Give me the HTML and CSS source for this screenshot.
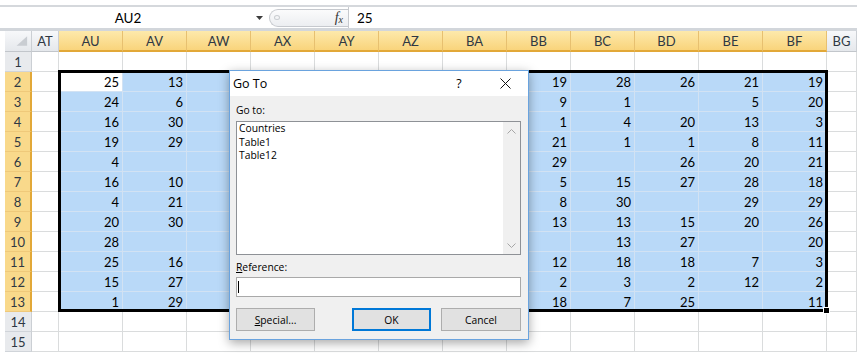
FILE: index.html
```html
<!DOCTYPE html>
<html>
<head>
<meta charset="utf-8">
<link rel="stylesheet" href="styles.css">
</head>
<body>
<div class="app">
  <div class="fbar">
    <div class="namebox">AU2</div>
    <div class="dd"><svg width="7" height="4" viewBox="0 0 7 4"><path d="M0 0H7L3.5 4Z" fill="#3c3c3c"/></svg></div>
    <div class="pill"><span class="grip"></span><span class="fx"><i>f</i><sub>x</sub></span></div>
    <div class="vsep"></div>
    <div class="fval">25</div>
  </div>

  <div class="sheet">
    <div class="h corner"><svg width="27" height="21" viewBox="0 0 27 21"><path d="M23 5V15H12Z" fill="#c9cdd2"/></svg></div>
    <div class="h">AT</div>
    <div class="h on">AU</div><div class="h on">AV</div><div class="h on">AW</div><div class="h on">AX</div><div class="h on">AY</div><div class="h on">AZ</div><div class="h on">BA</div><div class="h on">BB</div><div class="h on">BC</div><div class="h on">BD</div><div class="h on">BE</div><div class="h on">BF</div>
    <div class="h">BG</div>

    <div class="h rh">1</div>
    <div class="c"></div><div class="c"></div><div class="c"></div><div class="c"></div><div class="c"></div><div class="c"></div><div class="c"></div><div class="c"></div><div class="c"></div><div class="c"></div><div class="c"></div><div class="c"></div><div class="c"></div><div class="c"></div>

    <div class="h rh on">2</div><div class="c"></div>
    <div class="c s act">25</div><div class="c s">13</div><div class="c s"></div><div class="c s"></div><div class="c s"></div><div class="c s"></div><div class="c s"></div><div class="c s">19</div><div class="c s">28</div><div class="c s">26</div><div class="c s">21</div><div class="c s">19</div>
    <div class="c"></div>

    <div class="h rh on">3</div><div class="c"></div>
    <div class="c s">24</div><div class="c s">6</div><div class="c s"></div><div class="c s"></div><div class="c s"></div><div class="c s"></div><div class="c s"></div><div class="c s">9</div><div class="c s">1</div><div class="c s"></div><div class="c s">5</div><div class="c s">20</div>
    <div class="c"></div>

    <div class="h rh on">4</div><div class="c"></div>
    <div class="c s">16</div><div class="c s">30</div><div class="c s"></div><div class="c s"></div><div class="c s"></div><div class="c s"></div><div class="c s"></div><div class="c s">1</div><div class="c s">4</div><div class="c s">20</div><div class="c s">13</div><div class="c s">3</div>
    <div class="c"></div>

    <div class="h rh on">5</div><div class="c"></div>
    <div class="c s">19</div><div class="c s">29</div><div class="c s"></div><div class="c s"></div><div class="c s"></div><div class="c s"></div><div class="c s"></div><div class="c s">21</div><div class="c s">1</div><div class="c s">1</div><div class="c s">8</div><div class="c s">11</div>
    <div class="c"></div>

    <div class="h rh on">6</div><div class="c"></div>
    <div class="c s">4</div><div class="c s"></div><div class="c s"></div><div class="c s"></div><div class="c s"></div><div class="c s"></div><div class="c s"></div><div class="c s">29</div><div class="c s"></div><div class="c s">26</div><div class="c s">20</div><div class="c s">21</div>
    <div class="c"></div>

    <div class="h rh on">7</div><div class="c"></div>
    <div class="c s">16</div><div class="c s">10</div><div class="c s"></div><div class="c s"></div><div class="c s"></div><div class="c s"></div><div class="c s"></div><div class="c s">5</div><div class="c s">15</div><div class="c s">27</div><div class="c s">28</div><div class="c s">18</div>
    <div class="c"></div>

    <div class="h rh on">8</div><div class="c"></div>
    <div class="c s">4</div><div class="c s">21</div><div class="c s"></div><div class="c s"></div><div class="c s"></div><div class="c s"></div><div class="c s"></div><div class="c s">8</div><div class="c s">30</div><div class="c s"></div><div class="c s">29</div><div class="c s">29</div>
    <div class="c"></div>

    <div class="h rh on">9</div><div class="c"></div>
    <div class="c s">20</div><div class="c s">30</div><div class="c s"></div><div class="c s"></div><div class="c s"></div><div class="c s"></div><div class="c s"></div><div class="c s">13</div><div class="c s">13</div><div class="c s">15</div><div class="c s">20</div><div class="c s">26</div>
    <div class="c"></div>

    <div class="h rh on">10</div><div class="c"></div>
    <div class="c s">28</div><div class="c s"></div><div class="c s"></div><div class="c s"></div><div class="c s"></div><div class="c s"></div><div class="c s"></div><div class="c s"></div><div class="c s">13</div><div class="c s">27</div><div class="c s"></div><div class="c s">20</div>
    <div class="c"></div>

    <div class="h rh on">11</div><div class="c"></div>
    <div class="c s">25</div><div class="c s">16</div><div class="c s"></div><div class="c s"></div><div class="c s"></div><div class="c s"></div><div class="c s"></div><div class="c s">12</div><div class="c s">18</div><div class="c s">18</div><div class="c s">7</div><div class="c s">3</div>
    <div class="c"></div>

    <div class="h rh on">12</div><div class="c"></div>
    <div class="c s">15</div><div class="c s">27</div><div class="c s"></div><div class="c s"></div><div class="c s"></div><div class="c s"></div><div class="c s"></div><div class="c s">2</div><div class="c s">3</div><div class="c s">2</div><div class="c s">12</div><div class="c s">2</div>
    <div class="c"></div>

    <div class="h rh on">13</div><div class="c"></div>
    <div class="c s">1</div><div class="c s">29</div><div class="c s"></div><div class="c s"></div><div class="c s"></div><div class="c s"></div><div class="c s"></div><div class="c s">18</div><div class="c s">7</div><div class="c s">25</div><div class="c s"></div><div class="c s">11</div>
    <div class="c"></div>

    <div class="h rh">14</div>
    <div class="c"></div><div class="c"></div><div class="c"></div><div class="c"></div><div class="c"></div><div class="c"></div><div class="c"></div><div class="c"></div><div class="c"></div><div class="c"></div><div class="c"></div><div class="c"></div><div class="c"></div><div class="c"></div>

    <div class="h rh">15</div>
    <div class="c"></div><div class="c"></div><div class="c"></div><div class="c"></div><div class="c"></div><div class="c"></div><div class="c"></div><div class="c"></div><div class="c"></div><div class="c"></div><div class="c"></div><div class="c"></div><div class="c"></div><div class="c"></div>

    <div class="selbox"><span class="handle"></span></div>
  </div>

  <div class="dialog">
    <div class="titlebar">
      <span class="title">Go To</span>
      <span class="tbtn help">?</span>
      <span class="tbtn close"><svg width="11" height="11" viewBox="0 0 11 11"><path d="M0.5 0.5L10.5 10.5M10.5 0.5L0.5 10.5" stroke="#111" stroke-width="1" fill="none"/></svg></span>
    </div>
    <div class="dbody">
      <div class="lbl">Go to:</div>
      <div class="list">
        <div class="items">
          <div>Countries</div>
          <div>Table1</div>
          <div>Table12</div>
        </div>
        <div class="vscroll">
          <svg width="9" height="5" viewBox="0 0 9 5"><path d="M0.5 4.5L4.5 0.5L8.5 4.5" stroke="#a6a6a6" fill="none"/></svg>
          <svg width="9" height="5" viewBox="0 0 9 5"><path d="M0.5 0.5L4.5 4.5L8.5 0.5" stroke="#a6a6a6" fill="none"/></svg>
        </div>
      </div>
      <div class="lbl ref"><u>R</u>eference:</div>
      <div class="input"><span class="caret"></span></div>
      <div class="buttons">
        <button class="btn"><u>S</u>pecial...</button>
        <span class="spacer"></span>
        <button class="btn def">OK</button>
        <button class="btn wide">Cancel</button>
      </div>
    </div>
  </div>
</div>
</body>
</html>
```

FILE: styles.css
```css
* { box-sizing: border-box; }

body {
  margin: 0;
  background: #fff;
  font-family: Lato, "Liberation Sans", sans-serif;
}

.app {
  position: relative;
  width: 857px;
  height: 353px;
  overflow: hidden;
}

/* formula bar */
.fbar {
  display: flex;
  align-items: center;
  margin-top: 5px;
  height: 26px;
  border-top: 2px solid #d5d8dc;
  border-bottom: 3px solid #d2d6db;
  font-size: 13.5px;
  color: #000;
}

.namebox {
  width: 256px;
  text-align: center;
}

.dd {
  width: 13px;
  display: flex;
  align-items: center;
}

.pill {
  width: 79px;
  height: 18px;
  border: 1px solid #c6c9ce;
  border-right: 0;
  border-radius: 9px 0 0 9px;
  background: linear-gradient(#fbfbfc, #eceef1);
  display: flex;
  align-items: center;
  justify-content: space-between;
  padding: 0 5px 0 4px;
}

.grip {
  width: 6px;
  height: 5px;
  border: 1px solid #c9ccd0;
  border-radius: 50%;
}

.fx {
  font-family: "Liberation Serif", serif;
  font-size: 14px;
  color: #333;
  line-height: 1;
}

.fx i { font-style: italic; }

.fx sub {
  font-style: italic;
  font-size: 10px;
  vertical-align: -1px;
}

.vsep {
  width: 1px;
  height: 21px;
  background: #c6c9ce;
}

.fval { padding-left: 8px; }

/* sheet grid */
.sheet {
  position: relative;
  margin-left: 5px;
  display: grid;
  grid-template-columns: 27px 27px repeat(12, 64px) 30px;
  grid-template-rows: 21px;
  grid-auto-rows: 20px;
  font-size: 13px;
}

.h {
  display: flex;
  align-items: center;
  justify-content: center;
  color: #2f3843;
  background: linear-gradient(#f7f8fa, #e5e8ec);
  border-right: 1px solid #cbcfd4;
  border-bottom: 1px solid #c2c6cb;
}

.h.on {
  background: linear-gradient(#fde9ab, #f9d47c);
  border-right-color: #e7c070;
  border-bottom: 2px solid #e2a838;
}

.corner { padding: 0; }

.rh {
  background: #e8eaed;
  border-bottom-color: #d0d4d9;
}

.rh.on {
  background: #f9d98b;
  border-right: 2px solid #e2a838;
  border-bottom: 1px solid #efc97a;
}

.c {
  border-right: 1px solid #dadcdd;
  border-bottom: 1px solid #dadcdd;
  text-align: right;
  padding-right: 3px;
  line-height: 20px;
  color: #000;
}

.c.s {
  background: #b9d9f8;
  border-color: #d2e2f3;
}

.c.act { background: #fff; }

.selbox {
  position: absolute;
  left: 53px;
  top: 39px;
  width: 770px;
  height: 242px;
  border: 3px solid #000;
}

.handle {
  position: absolute;
  right: -5px;
  bottom: -5px;
  width: 7px;
  height: 7px;
  background: #000;
  border: 1px solid #fff;
}

/* dialog */
.dialog {
  position: absolute;
  left: 229px;
  top: 70px;
  width: 300px;
  height: 270px;
  border: 1px solid #6aa3de;
  background: #f0f0f0;
  box-shadow: 0 3px 10px rgba(0, 0, 0, 0.35);
  display: flex;
  flex-direction: column;
  font-family: "Open Sans", "Noto Sans", sans-serif;
  font-size: 10.3px;
  color: #000;
}

.titlebar {
  height: 25px;
  flex: none;
  background: #fff;
  display: flex;
  align-items: center;
}

.title {
  flex: 1;
  padding-left: 3px;
  font-size: 12.5px;
}

.tbtn {
  width: 46px;
  height: 25px;
  display: flex;
  align-items: center;
  justify-content: center;
}

.help { font-size: 12.5px; }

.dbody {
  flex: 1;
  padding: 7px 7px 8px 6px;
  display: flex;
  flex-direction: column;
}

.lbl {
  height: 14px;
  line-height: 14px;
}

.list {
  margin-top: 4px;
  height: 134px;
  border: 1px solid #8e9196;
  background: #fff;
  display: flex;
}

.items {
  flex: 1;
  padding-left: 2px;
  line-height: 13.5px;
}

.vscroll {
  width: 17px;
  background: #f0f0f0;
  display: flex;
  flex-direction: column;
  justify-content: space-between;
  align-items: center;
  padding: 7px 0 6px;
}

.ref { margin-top: 5px; }

.input {
  margin-top: 3px;
  height: 20px;
  border: 1px solid #a9a9a9;
  background: #fff;
  display: flex;
  align-items: center;
  padding-left: 1px;
}

.caret {
  width: 1px;
  height: 12px;
  background: #000;
}

.buttons {
  margin-top: 11px;
  display: flex;
  gap: 10px;
}

.btn {
  width: 79px;
  height: 23px;
  padding: 0;
  font: inherit;
  color: #000;
  background: #e1e1e1;
  border: 1px solid #adadad;
}

.btn.def { border: 2px solid #0078d7; }
.btn.wide { width: 80px; }

.spacer { flex: 1; }
```
